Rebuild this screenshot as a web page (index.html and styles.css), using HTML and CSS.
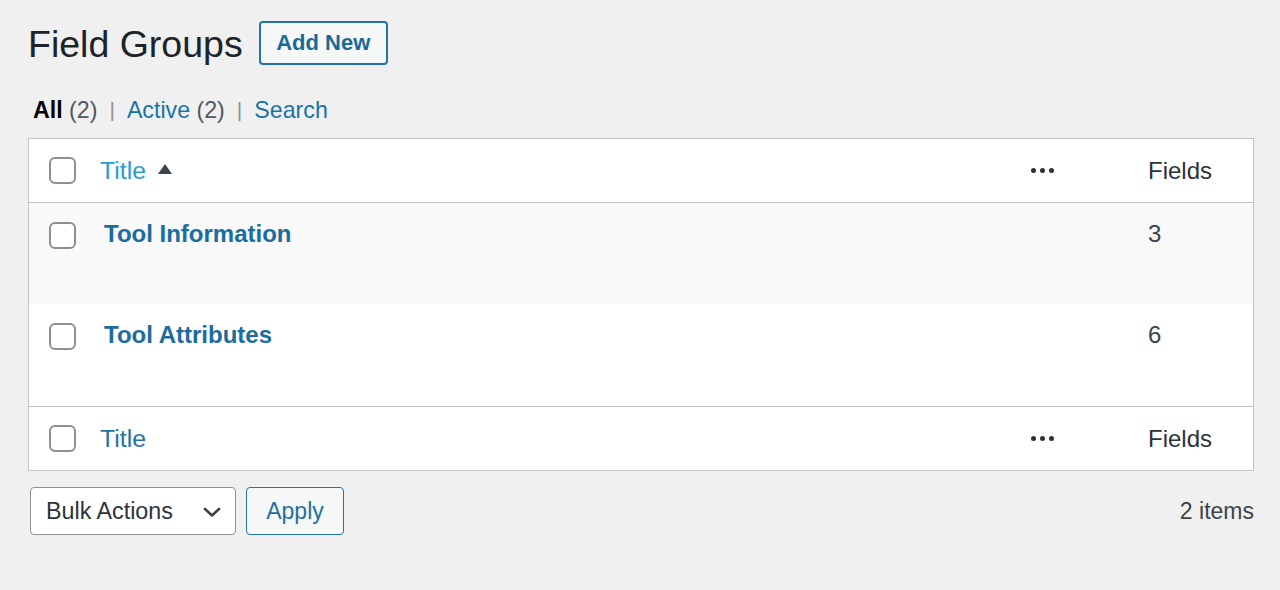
FILE: index.html
```html
<!DOCTYPE html>
<html lang="en">
<head>
<meta charset="utf-8">
<title>Field Groups</title>
<link rel="stylesheet" href="styles.css">
</head>
<body>
<div class="wrap">
  <div class="head">
    <h1 class="title">Field Groups</h1>
    <a class="btn-add" href="#">Add New</a>
  </div>
  <ul class="subsub">
    <li class="current">All <span class="count">(2)</span></li>
    <li class="sep">|</li>
    <li><a href="#">Active</a> <span class="count">(2)</span></li>
    <li class="sep">|</li>
    <li><a href="#">Search</a></li>
  </ul>
  <div class="table">
    <div class="row thead">
      <div class="c-check"><span class="cb"></span></div>
      <div class="c-title"><a class="sorted" href="#">Title</a><span class="arrow"></span></div>
      <div class="c-dots"><span class="dot"></span><span class="dot"></span><span class="dot"></span></div>
      <div class="c-fields">Fields</div>
    </div>
    <div class="row item alt">
      <div class="c-check"><span class="cb"></span></div>
      <div class="c-title"><a class="row-title" href="#">Tool Information</a></div>
      <div class="c-dots"></div>
      <div class="c-fields">3</div>
    </div>
    <div class="row item">
      <div class="c-check"><span class="cb"></span></div>
      <div class="c-title"><a class="row-title" href="#">Tool Attributes</a></div>
      <div class="c-dots"></div>
      <div class="c-fields">6</div>
    </div>
    <div class="row tfoot">
      <div class="c-check"><span class="cb"></span></div>
      <div class="c-title"><a class="plain" href="#">Title</a></div>
      <div class="c-dots"><span class="dot"></span><span class="dot"></span><span class="dot"></span></div>
      <div class="c-fields">Fields</div>
    </div>
  </div>
  <div class="tablenav">
    <div class="select">
      <span>Bulk Actions</span>
      <svg class="chev" width="18" height="12" viewBox="0 0 18 12"><path d="M2 3 L9 9.5 L16 3" fill="none" stroke="#3c434a" stroke-width="2.6" stroke-linecap="round" stroke-linejoin="round"/></svg>
    </div>
    <a class="btn-apply" href="#">Apply</a>
    <div class="items">2 items</div>
  </div>
</div>
</body>
</html>
```

FILE: styles.css
```css
html, body {
  margin: 0;
  padding: 0;
  background: #f0f0f1;
}
body {
  font-family: "Liberation Sans", Arial, sans-serif;
  color: #3c434a;
  width: 1280px;
  height: 590px;
  overflow: hidden;
}
a { text-decoration: none; }
.wrap {
  padding: 21px 26px 0 28px;
}
.head {
  display: flex;
  align-items: center;
  height: 44px;
}
.title {
  margin: 0;
  font-size: 37.5px;
  font-weight: 400;
  color: #1d2327;
  letter-spacing: 0;
  line-height: 44px;
  position: relative;
  top: 1px;
}
.btn-add {
  margin-left: 16px;
  box-sizing: border-box;
  height: 44px;
  width: 129px;
  border: 2px solid #2271b1;
  border-radius: 4px;
  background: #f6f7f7;
  color: #1a6a96;
  font-weight: 700;
  font-size: 22px;
  display: flex;
  align-items: center;
  justify-content: center;
}
.subsub {
  list-style: none;
  margin: 0;
  padding: 0 0 0 5px;
  display: flex;
  align-items: center;
  height: 30px;
  margin-top: 30px;
  font-size: 23.2px;
  color: #50575e;
}
.subsub li { white-space: pre; }
.subsub .current { color: #000; font-weight: 700; }
.subsub .current .count { font-weight: 400; color: #50575e; }
.subsub .count { color: #50575e; }
.subsub .sep { color: #8c8f94; margin: 0 12px; font-size: 21px; }
.subsub a { color: #1a73a8; }

.table {
  margin-top: 13px;
  width: 1226px;
  box-sizing: border-box;
  border: 1px solid #c3c4c7;
  background: #fff;
}
.row {
  display: grid;
  grid-template-columns: 71px 1fr 90px 166px;
  align-items: center;
}
.thead { height: 63px; border-bottom: 1px solid #c3c4c7; }
.tfoot { height: 63px; border-top: 1px solid #c3c4c7; }
.item { height: 101px; align-items: start; }
.item + .item { height: 102px; }
.alt { background: #f9f9f9; }
.c-check { padding-left: 20px; display: flex; }
.item .c-check { padding-top: 19px; }
.cb {
  display: block;
  width: 23px;
  height: 23px;
  border: 2px solid #8c8f94;
  border-radius: 6px;
  background: #fff;
}
.c-title { display: flex; align-items: center; font-size: 24.8px; }
.sorted { color: #2a9cd2; }
.plain { color: #1f73a6; }
.arrow {
  width: 0; height: 0;
  margin-left: 12px;
  border-left: 7px solid transparent;
  border-right: 7px solid transparent;
  border-bottom: 10px solid #3c434a;
  position: relative;
  top: -2px;
}
.item .c-title { padding-top: 17px; padding-left: 4px; }
.row-title { color: #1a6d9c; font-weight: 700; font-size: 24px; }
.c-dots { display: flex; justify-content: center; gap: 4px; }
.dot { width: 5px; height: 5px; border-radius: 50%; background: #2c3338; }
.c-fields { padding-left: 61px; font-size: 24px; color: #2c3338; }
.item .c-fields { padding-top: 17px; color: #3c434a; }

.tablenav {
  display: flex;
  align-items: center;
  margin-top: 16px;
  width: 1226px;
  height: 48px;
}
.select {
  margin-left: 2px;
  box-sizing: border-box;
  width: 206px;
  height: 48px;
  border: 1.5px solid #8c8f94;
  border-radius: 4px;
  background: #fff;
  display: flex;
  align-items: center;
  justify-content: space-between;
  padding: 0 14px 0 15px;
  font-size: 23.3px;
  color: #2c3338;
}
.chev { margin-top: 1px; }
.btn-apply {
  margin-left: 10px;
  box-sizing: border-box;
  width: 98px;
  height: 48px;
  border: 1.5px solid #2271b1;
  border-radius: 4px;
  background: #f6f7f7;
  color: #1f6fa2;
  font-size: 23px;
  display: flex;
  align-items: center;
  justify-content: center;
}
.items {
  margin-left: auto;
  font-size: 23px;
  color: #3c434a;
}
```
